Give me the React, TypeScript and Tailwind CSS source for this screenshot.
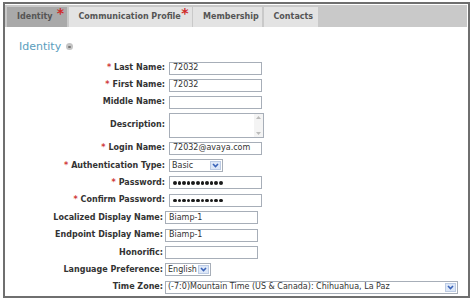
import React from 'react';

const font = { fontFamily: '"DejaVu Sans", Verdana, sans-serif' };

const Star = () => <span className="text-[#d03a3a] mr-[3px]">*</span>;

const Arrow = () => (
  <span className="absolute right-[1px] top-[1px] bottom-[1px] w-[11px] bg-[#dde7f7] border border-[#bccbe4] flex items-center justify-center">
    <svg width="7" height="5" viewBox="0 0 7 5">
      <path d="M1 1 L3.5 3.5 L6 1" fill="none" stroke="#3a63b8" strokeWidth="1.6" />
    </svg>
  </span>
);

const Dots = () => (
  <span className="flex gap-[1px]">
    {Array.from({ length: 11 }).map((_, i) => (
      <span key={i} className="block shrink-0 w-[3.6px] h-[3.6px] rounded-full bg-[#1a1a1a]" />
    ))}
  </span>
);

const Field = ({ value, pwd, w = 'w-[93px]' }: { value?: string; pwd?: boolean; w?: string }) => (
  <div className={`${w} h-[13px] border border-[#a7aeb8] bg-white flex items-center pl-[3px] text-[8px] font-normal text-[#333] leading-none`}>
    {pwd ? <Dots /> : value}
  </div>
);

const Select = ({ value, w }: { value: string; w: string }) => (
  <div className={`${w} relative h-[13px] border border-[#a7aeb8] bg-white flex items-center pl-[2px] text-[8px] font-normal text-[#333] leading-none whitespace-nowrap overflow-hidden`}>
    {value}
    <Arrow />
  </div>
);

type Row = { label: string; req?: boolean; node: React.ReactNode; h: string };

const group1: Row[] = [
  { label: 'Last Name:', req: true, node: <Field value="72032" />, h: 'h-[17px]' },
  { label: 'First Name:', req: true, node: <Field value="72032" />, h: 'h-[17px]' },
  { label: 'Middle Name:', node: <Field />, h: 'h-[17px]' },
  {
    label: 'Description:',
    node: (
      <div className="w-[95px] h-[25px] border border-[#a7aeb8] bg-white flex justify-end">
        <div className="w-[9px] h-full flex flex-col justify-between items-center py-[2px] bg-[#f4f4f4]">
          <svg width="5" height="3" viewBox="0 0 5 3"><path d="M0 3 L2.5 0 L5 3Z" fill="#bbb" /></svg>
          <svg width="5" height="3" viewBox="0 0 5 3"><path d="M0 0 L2.5 3 L5 0Z" fill="#bbb" /></svg>
        </div>
      </div>
    ),
    h: 'h-[28.5px]',
  },
  { label: 'Login Name:', req: true, node: <Field value="72032@avaya.com" />, h: 'h-[17.4px]' },
  { label: 'Authentication Type:', req: true, node: <Select value="Basic" w="w-[54px]" />, h: 'h-[17.4px]' },
  { label: 'Password:', req: true, node: <Field pwd />, h: 'h-[17.4px]' },
  { label: 'Confirm Password:', req: true, node: <Field pwd />, h: 'h-[17.4px]' },
];

const group2: Row[] = [
  { label: 'Localized Display Name:', node: <Field value="Biamp-1" />, h: 'h-[17.4px]' },
  { label: 'Endpoint Display Name:', node: <Field value="Biamp-1" />, h: 'h-[17.4px]' },
  { label: 'Honorific:', node: <Field />, h: 'h-[17.4px]' },
  { label: 'Language Preference:', node: <Select value="English" w="w-[46px]" />, h: 'h-[17.4px]' },
  {
    label: 'Time Zone:',
    node: <Select value="(-7:0)Mountain Time (US & Canada): Chihuahua, La Paz" w="w-[293px]" />,
    h: 'h-[17.4px]',
  },
];

const Tab = ({ label, active, req, w }: { label: string; active?: boolean; req?: boolean; w: string }) => (
  <div className={`${w} h-full relative flex items-center pl-[10px] text-[8px] font-bold text-[#555] ${active ? 'bg-[#a9a9a9]' : 'bg-[#e3e3e3]'}`}>
    {label}
    {req && <span className="absolute right-[3px] top-[-1px] text-[14px] font-bold text-[#d02a2a] leading-none">*</span>}
  </div>
);

export default function App() {
  return (
    <div className="w-[474px] h-[302px] bg-white pt-[2px] pl-[3px] pr-[4px] pb-[4px]" style={font}>
      <div className="h-full border-2 border-[#6f6f6f] flex flex-col">
        <div className="h-[22px] mt-[1px] mr-[1px] bg-[#c9c9c9] flex items-end pl-[2px]">
          <div className="h-[20px] flex gap-[1.5px]">
            <Tab label="Identity" active req w="w-[60px]" />
            <Tab label="Communication Profile" req w="w-[123px]" />
            <Tab label="Membership" w="w-[69px]" />
            <Tab label="Contacts" w="w-[54px]" />
          </div>
        </div>
        <div className="pl-[14px] mt-[13px] h-[14px] flex items-center gap-[5px]">
          <span className="text-[11px] text-[#5a9dbd]">Identity</span>
          <span className="w-[7px] h-[7px] rounded-full bg-[#c4c4c4] flex items-center justify-center">
            <span className="w-[3px] h-[2px] rounded-full bg-[#777]" />
          </span>
        </div>
        <div className="mt-[6px] flex flex-col text-[8px]">
          {group1.map(r => (
            <div key={r.label} className={`${r.h} flex items-center`}>
              <div className="w-[160px] text-right font-bold text-[#333] whitespace-nowrap">
                {r.req && <Star />}
                {r.label}
              </div>
              <div className="ml-[4px]">{r.node}</div>
            </div>
          ))}
          {group2.map(r => (
            <div key={r.label} className={`${r.h} flex items-center`}>
              <div className="w-[158px] text-right font-bold text-[#333] whitespace-nowrap">{r.label}</div>
              <div className="ml-[2px]">{r.node}</div>
            </div>
          ))}
        </div>
      </div>
    </div>
  );
}
